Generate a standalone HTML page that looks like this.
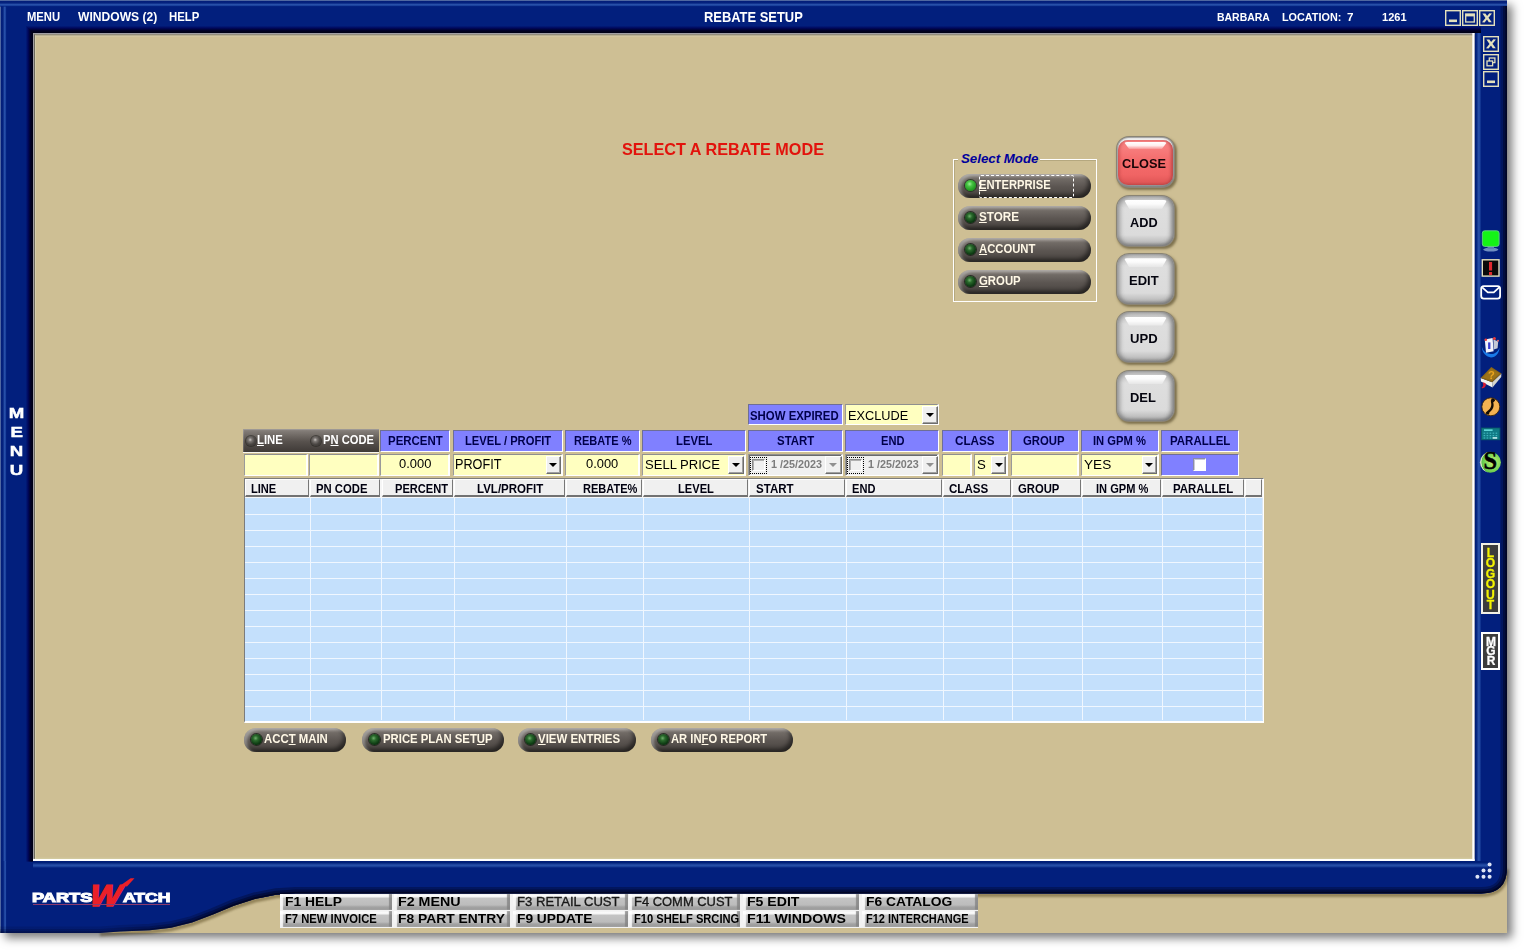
<!DOCTYPE html>
<html lang="en">
<head>
<meta charset="utf-8">
<title>REBATE SETUP</title>
<style>
html,body{margin:0;padding:0;background:#fff;}
body{width:1524px;height:950px;overflow:hidden;position:relative;font-family:"Liberation Sans",sans-serif;}
#win{position:absolute;left:0;top:0;width:1507px;height:933px;background:#cebf94;box-shadow:5px 5px 9px 0 rgba(0,0,0,.52);}
#win div,#win span.t,#win svg{position:absolute;box-sizing:border-box;}
span.t{white-space:pre;transform-origin:0 50%;display:block;letter-spacing:0;}
span.t.v{writing-mode:vertical-rl;text-orientation:upright;font-weight:bold;line-height:13px;width:13px;letter-spacing:-4.6px;transform:scaleX(.8);transform-origin:50% 50%;}
span.t u{text-decoration:underline;text-underline-offset:1px;}
.hdr{background:#8080ff;border:1px solid;border-color:#6e6e96 #fff #fff #6e6e96;}
.inp{background:#ffffc0;border:solid;border-width:1px 2px 1.6px 1.4px;border-color:#8f8f8f #fff #fff #9a9a9a;}
.dd{background:#f0f0f0;border:1px solid;border-color:#fff #6d6d6d #6d6d6d #fff;box-shadow:inset -1px -1px 0 #a0a0a0;}
.dd:after{content:"";position:absolute;left:50%;top:50%;margin:-2px 0 0 -4px;border:4px solid transparent;border-top:4px solid #000;border-bottom:0;}
.dd.g:after{border-top-color:#909090;}
.gh{background:#f0f0f0;border:solid;border-width:1px 1.6px 2px 1px;border-color:#fff #777 #727272 #fff;}
.pill{border-radius:12px;background:linear-gradient(180deg,#8f8983 0%,#716b66 20%,#5c5652 52%,#47423e 100%);box-shadow:inset 3px 2px 3px rgba(255,255,255,.34),inset -3px -3px 4px rgba(0,0,0,.5);}
.led{border-radius:50%;width:11px;height:11px;}
.led.on{background:radial-gradient(circle at 42% 36%,#9af094 0%,#46c242 28%,#27a026 60%,#147214 100%);box-shadow:0 0 0 1px rgba(30,45,25,.75);}
.led.off{background:radial-gradient(circle at 42% 38%,#6fae6c 0%,#2a6a2c 26%,#0f3c14 62%,#071e0a 100%);box-shadow:0 0 0 1px rgba(25,30,22,.8);}
.led.gr{background:radial-gradient(circle at 42% 38%,#c8c4c0 0%,#7a7572 22%,#4a4643 55%,#2e2a28 100%);box-shadow:0 0 0 1px rgba(30,30,25,.5);}
.bb{border-radius:13px;background:#8a8474;box-shadow:1.5px 2px 2.5px rgba(60,50,20,.55);}
.bf{border-radius:12px;overflow:hidden;}
.bf.w{background:linear-gradient(180deg,#bcbcbc 0%,#c6c6c6 7%,#dedede 24%,#dbdbdb 78%,#bdbdbd 92%,#9e9e9e 100%);box-shadow:inset 4px 0 4px -1px rgba(120,120,120,.65),inset -4px 0 4px -1px rgba(105,105,105,.75),inset 0 -2px 3px rgba(110,110,110,.35);}
.bf.r{border-radius:10px;background:linear-gradient(180deg,#f68484 0%,#f77c7c 20%,#f46c6c 45%,#f06464 78%,#e25858 93%,#cc4c4c 100%);box-shadow:inset 3px 0 3px -1px rgba(190,70,70,.6),inset -3px 0 3px -1px rgba(170,60,60,.7),0 -1.4px 1px rgba(255,255,255,.75);}
#win .bf .hl{left:7px;top:4.2px;right:7px;height:9px;background:linear-gradient(180deg,#fff 0%,rgba(255,255,255,.92) 45%,rgba(255,255,255,.25) 100%);clip-path:polygon(0 0,100% 0,88% 100%,12% 100%);border-radius:3px;filter:blur(.6px);}
#win .bf.r .hl{left:6px;top:2.4px;right:6px;height:7px;background:linear-gradient(180deg,#fff 0%,rgba(255,244,244,.95) 50%,rgba(255,210,210,.3) 100%);}
.fk{background:linear-gradient(180deg,#ffffff 0,#f4f4f4 3px,#c4c4c4 4px,#bcbcbc 11px,#a2a2a2 13px,#9a9a9a 100%);box-shadow:inset 3px 0 1px rgba(255,255,255,.85),inset -3px 0 1px rgba(130,130,130,.8);}
.wb{border:1px solid #e4e0bc;background:#021f7d;}
</style>
</head>
<body>
<div id="win">
<svg width="1524" height="950" viewBox="0 0 1524 950" style="left:0;top:0">
<defs>
<linearGradient id="gt" x1="0" y1="0" x2="0" y2="1"><stop offset="0" stop-color="#5068a0"/><stop offset=".03" stop-color="#5068a0"/><stop offset=".031" stop-color="#031d79"/><stop offset=".09" stop-color="#05237f"/><stop offset=".135" stop-color="#2850a8"/><stop offset=".16" stop-color="#214aa4"/><stop offset=".2" stop-color="#021f7d"/><stop offset=".78" stop-color="#021f7d"/><stop offset=".85" stop-color="#00075c"/><stop offset=".93" stop-color="#000024"/><stop offset="1" stop-color="#000012"/></linearGradient>
<linearGradient id="gl" x1="0" y1="0" x2="1" y2="0"><stop offset="0" stop-color="#5068a0"/><stop offset=".03" stop-color="#5068a0"/><stop offset=".031" stop-color="#031d79"/><stop offset=".09" stop-color="#05237f"/><stop offset=".135" stop-color="#2850a8"/><stop offset=".16" stop-color="#214aa4"/><stop offset=".2" stop-color="#021f7d"/><stop offset=".78" stop-color="#021f7d"/><stop offset=".85" stop-color="#00075c"/><stop offset=".93" stop-color="#000024"/><stop offset="1" stop-color="#000012"/></linearGradient>
<linearGradient id="gr" x1="0" y1="0" x2="1" y2="0"><stop offset="0" stop-color="#001c74"/><stop offset=".05" stop-color="#00207a"/><stop offset=".125" stop-color="#2850a8"/><stop offset=".155" stop-color="#2149a2"/><stop offset=".21" stop-color="#021f7d"/><stop offset="1" stop-color="#021f7d"/></linearGradient>
<linearGradient id="gb" x1="0" y1="0" x2="0" y2="1"><stop offset="0" stop-color="#001c74"/><stop offset=".05" stop-color="#00207a"/><stop offset=".125" stop-color="#2850a8"/><stop offset=".155" stop-color="#2149a2"/><stop offset=".21" stop-color="#021f7d"/><stop offset="1" stop-color="#021f7d"/></linearGradient>
<linearGradient id="gl6" x1="0" y1="0" x2="1" y2="0"><stop offset="0" stop-color="#5068a0"/><stop offset=".16" stop-color="#5068a0"/><stop offset=".17" stop-color="#031d79"/><stop offset=".5" stop-color="#05237f"/><stop offset=".74" stop-color="#2850a8"/><stop offset=".88" stop-color="#214aa4"/><stop offset="1" stop-color="#021f7d"/></linearGradient>
<linearGradient id="eg" gradientUnits="userSpaceOnUse" x1="110" y1="0" x2="240" y2="0"><stop offset="0" stop-color="#000016" stop-opacity=".4"/><stop offset="1" stop-color="#000016" stop-opacity="1"/></linearGradient>
<filter id="bl" x="-5%" y="-50%" width="110%" height="200%"><feGaussianBlur stdDeviation="1.3"/></filter>
<clipPath id="fc"><path d="M0,0 H1507 V868 Q1507,893.5 1481,893.5 L295,893.5 L276,894.7 L255,898.9 L234,905.7 L213,914.6 L192,922.5 L171,927.8 L150,930.2 L120,931.6 L100,933 H0 Z M33,33 H1474.5 V861 H33 Z" clip-rule="evenodd"/></clipPath>
</defs>
<path d="M1507,868 Q1507,893.5 1481,893.5 L295,893.5 L276,894.7 L255,898.9 L234,905.7 L213,914.6 L192,922.5 L171,927.8 L150,930.2 L120,931.6 L100,933" transform="translate(0,1.6)" fill="none" stroke="#3a2c00" stroke-width="4" opacity=".4" filter="url(#bl)"/>
<path d="M0,0 H1507 V868 Q1507,893.5 1481,893.5 L295,893.5 L276,894.7 L255,898.9 L234,905.7 L213,914.6 L192,922.5 L171,927.8 L150,930.2 L120,931.6 L100,933 H0 Z M33,33 H1474.5 V861 H33 Z" fill="#021f7d" fill-rule="evenodd"/>
<g clip-path="url(#fc)">
<rect x="0" y="0" width="1507" height="33" fill="url(#gt)"/>
<rect x="1481" y="6.6" width="26" height="30" fill="#021f7d"/>
<rect x="1474.5" y="33" width="33" height="840" fill="url(#gr)"/>
<rect x="33" y="861" width="1455" height="33" fill="url(#gb)"/>
<rect x="33" y="868" width="262" height="30" fill="#021f7d"/>
<rect x="0" y="6.6" width="33" height="855" fill="url(#gl)"/>
<rect x="0" y="861" width="6.6" height="72" fill="url(#gl6)"/>
<path d="M0,0 L33,33 L33,0 Z" fill="url(#gt)"/>
<path d="M1474.5,861 L1507,893.5 L1474.5,893.5 Z" fill="url(#gb)"/>
<path d="M1474.5,861 h7 l-7,7 Z" fill="#1a3f9c" opacity=".0"/>
<g fill="none" stroke="url(#eg)"><path d="M1507,6 V868 Q1507,893.5 1481,893.5 L295,893.5 L276,894.7 L255,898.9 L234,905.7 L213,914.6 L192,922.5 L171,927.8 L150,930.2 L120,931.6 L100,933 H0" stroke-width="13" opacity=".3"/><path d="M1507,6 V868 Q1507,893.5 1481,893.5 L295,893.5 L276,894.7 L255,898.9 L234,905.7 L213,914.6 L192,922.5 L171,927.8 L150,930.2 L120,931.6 L100,933 H0" stroke-width="8" opacity=".42"/><path d="M1507,6 V868 Q1507,893.5 1481,893.5 L295,893.5 L276,894.7 L255,898.9 L234,905.7 L213,914.6 L192,922.5 L171,927.8 L150,930.2 L120,931.6 L100,933 H0" stroke-width="3.4" opacity=".62"/></g>
</g>
<rect x="33" y="33" width="1441.5" height="1.5" fill="#a09ea4"/><rect x="33" y="34.5" width="1441.5" height="1" fill="#6e6a5c"/><rect x="35" y="35.5" width="1437.5" height="1" fill="#d4ccaa"/>
<rect x="33" y="33" width="1" height="828" fill="#a09ea4"/><rect x="34" y="34.5" width="1" height="826.5" fill="#6e6a5c"/><rect x="35" y="35.5" width="1" height="823.5" fill="#d4ccaa"/>
<rect x="1472.3" y="33" width="2.2" height="828" fill="#fff"/><rect x="33" y="858.9" width="1441.5" height="2.1" fill="#fff"/>
<rect x="36" y="857.6" width="1436" height="1.3" fill="#d2c99e"/>
<g fill="#dfe5f6"><circle cx="1489.6" cy="864.5" r="2"/><circle cx="1483.5" cy="870.6" r="2"/><circle cx="1489.6" cy="870.6" r="2"/><circle cx="1477.4" cy="876.7" r="2"/><circle cx="1483.5" cy="876.7" r="2"/><circle cx="1489.6" cy="876.7" r="2"/></g>
</svg>
<svg width="16" height="16" viewBox="0 0 16 16" style="left:1444.5px;top:9.5px"><rect x=".7" y=".7" width="14.6" height="14.6" fill="#021f7d" stroke="#e4e0bc" stroke-width="1.4"/><rect x="4" y="9.5" width="8" height="2.6" fill="#e4e0bc"/></svg>
<svg width="16" height="16" viewBox="0 0 16 16" style="left:1461.7px;top:9.5px"><rect x=".7" y=".7" width="14.6" height="14.6" fill="#021f7d" stroke="#e4e0bc" stroke-width="1.4"/><rect x="3.7" y="4" width="8.6" height="8" fill="none" stroke="#e4e0bc" stroke-width="1.3"/><rect x="3.7" y="4" width="8.6" height="2.4" fill="#e4e0bc"/></svg>
<svg width="16" height="16" viewBox="0 0 16 16" style="left:1479px;top:9.5px"><rect x=".7" y=".7" width="14.6" height="14.6" fill="#021f7d" stroke="#e4e0bc" stroke-width="1.4"/><path d="M3.4,3.6 L6.4,3.6 L8.1,6.1 L10.4,3.2 L13,3.4 L9.5,7.7 L12.8,12.2 L9.8,12.2 L8,9.6 L5.6,12.6 L3,12.2 L6.5,7.9 Z" fill="#e4e0bc"/></svg>
<svg width="16" height="16" viewBox="0 0 16 16" style="left:1482.7px;top:35.6px"><rect x=".7" y=".7" width="14.6" height="14.6" fill="#021f7d" stroke="#e4e0bc" stroke-width="1.4"/><path d="M3.4,3.6 L6.4,3.6 L8.1,6.1 L10.4,3.2 L13,3.4 L9.5,7.7 L12.8,12.2 L9.8,12.2 L8,9.6 L5.6,12.6 L3,12.2 L6.5,7.9 Z" fill="#e4e0bc"/></svg>
<svg width="16" height="16" viewBox="0 0 16 16" style="left:1482.7px;top:54.3px"><rect x=".7" y=".7" width="14.6" height="14.6" fill="#021f7d" stroke="#e4e0bc" stroke-width="1.4"/><rect x="6.3" y="4" width="5.6" height="4.6" fill="none" stroke="#e4e0bc" stroke-width="1.3"/><rect x="4" y="7" width="5.6" height="4.8" fill="#021f7d" stroke="#e4e0bc" stroke-width="1.3"/></svg>
<svg width="16" height="16" viewBox="0 0 16 16" style="left:1482.7px;top:71px"><rect x=".7" y=".7" width="14.6" height="14.6" fill="#021f7d" stroke="#e4e0bc" stroke-width="1.4"/><rect x="4" y="9.5" width="8" height="2.6" fill="#e4e0bc"/></svg>
<span class="t v" style="left:8.4px;top:404px;font-size:15.3px;line-height:16px;width:16px;letter-spacing:1.9px;color:#fff;transform:scaleX(1.22);-webkit-text-stroke:.45px #fff;">MENU</span>
<div style="left:952.5px;top:158.5px;width:144.5px;height:143.5px;border:1px solid #fff;box-shadow:inset 1px 1px 0 rgba(160,150,110,.55), 1px 1px 0 rgba(160,150,110,.0);"></div>
<div style="left:958px;top:150px;width:82px;height:16px;background:#cebf94;"></div>
<div class="pill" style="left:957.6px;top:174px;width:133.80000000000007px;height:23.80000000000001px;"></div>
<div class="led on" style="left:965.3px;top:180px"></div>
<div class="pill" style="left:957.6px;top:206px;width:133.80000000000007px;height:23.80000000000001px;"></div>
<div class="led off" style="left:965.3px;top:212px"></div>
<div class="pill" style="left:957.6px;top:238px;width:133.80000000000007px;height:23.80000000000001px;"></div>
<div class="led off" style="left:965.3px;top:244px"></div>
<div class="pill" style="left:957.6px;top:270px;width:133.80000000000007px;height:23.80000000000001px;"></div>
<div class="led off" style="left:965.3px;top:276px"></div>
<div style="left:979px;top:175px;width:94.5px;height:22.5px;border:1px dashed #fff;border-radius:2px;"></div>
<div class="bb" style="left:1115.6px;top:136.2px;width:59.8px;height:52.2px"></div>
<div class="bf w" style="left:1117px;top:137.3px;width:57.3px;height:50px"></div>
<div class="bf r" style="left:1117.9px;top:139.7px;width:55.2px;height:45.6px"><div class="hl"></div></div>
<div class="bb" style="left:1115.6px;top:194.5px;width:59.8px;height:52.2px"></div>
<div class="bf w" style="left:1117px;top:195.6px;width:57.3px;height:50px"><div class=hl></div></div>
<div class="bb" style="left:1115.6px;top:252.9px;width:59.8px;height:52.2px"></div>
<div class="bf w" style="left:1117px;top:254.0px;width:57.3px;height:50px"><div class=hl></div></div>
<div class="bb" style="left:1115.6px;top:311.2px;width:59.8px;height:52.2px"></div>
<div class="bf w" style="left:1117px;top:312.4px;width:57.3px;height:50px"><div class=hl></div></div>
<div class="bb" style="left:1115.6px;top:369.6px;width:59.8px;height:52.2px"></div>
<div class="bf w" style="left:1117px;top:370.7px;width:57.3px;height:50px"><div class=hl></div></div>
<div style="left:243px;top:429.3px;width:136px;height:23.099999999999966px;background:linear-gradient(180deg,#8a847f 0%,#6e6863 30%,#57514d 55%,#3f3a37 100%);box-shadow:inset 1px 1px 1px rgba(255,255,255,.2),0 1px 0 rgba(255,255,255,.85);"></div>
<div class="led gr" style="left:245.5px;top:435.6px;width:10px;height:10px"></div>
<div class="led gr" style="left:310.8px;top:435.6px;width:10px;height:10px"></div>
<div class="hdr" style="left:380.2px;top:430px;width:70.1px;height:21.5px"></div>
<div class="hdr" style="left:452.5px;top:430px;width:110.1px;height:21.5px"></div>
<div class="hdr" style="left:564.6px;top:430px;width:75.2px;height:21.5px"></div>
<div class="hdr" style="left:641.6px;top:430px;width:104.1px;height:21.5px"></div>
<div class="hdr" style="left:747.5px;top:430px;width:95.1px;height:21.5px"></div>
<div class="hdr" style="left:844.7px;top:430px;width:94.6px;height:21.5px"></div>
<div class="hdr" style="left:941.5px;top:430px;width:67.2px;height:21.5px"></div>
<div class="hdr" style="left:1010.8px;top:430px;width:68.0px;height:21.5px"></div>
<div class="hdr" style="left:1080.6px;top:430px;width:78.0px;height:21.5px"></div>
<div class="hdr" style="left:1160.8px;top:430px;width:78.2px;height:21.5px"></div>
<div class="hdr" style="left:747.5px;top:404.2px;width:95.1px;height:21.3px"></div>
<div class="inp" style="left:243.6px;top:453.6px;width:64.6px;height:22.0px"></div>
<div class="inp" style="left:308.6px;top:453.6px;width:70.2px;height:22.0px"></div>
<div class="inp" style="left:380.2px;top:453.6px;width:70.1px;height:22.0px"></div>
<div class="inp" style="left:452.5px;top:453.6px;width:110.1px;height:22.0px"></div>
<div class="dd" style="left:545.5px;top:455.6px;width:15.8px;height:18.2px"></div>
<div class="inp" style="left:564.6px;top:453.6px;width:75.2px;height:22.0px"></div>
<div class="inp" style="left:641.6px;top:453.6px;width:104.1px;height:22.0px"></div>
<div class="dd" style="left:728.2px;top:455.6px;width:16.0px;height:18.2px"></div>
<div class="inp" style="left:941.5px;top:453.6px;width:30.3px;height:22.0px"></div>
<div class="inp" style="left:973.7px;top:453.6px;width:33.9px;height:22.0px"></div>
<div class="dd" style="left:991.4px;top:455.6px;width:15.0px;height:18.2px"></div>
<div class="inp" style="left:1010.8px;top:453.6px;width:68.0px;height:22.0px"></div>
<div class="inp" style="left:1080.6px;top:453.6px;width:78.0px;height:22.0px"></div>
<div class="dd" style="left:1141.6px;top:455.6px;width:15.4px;height:18.2px"></div>
<div class="inp" style="left:844.7px;top:404.2px;width:94.8px;height:21.3px"></div>
<div class="dd" style="left:922.4px;top:406.2px;width:15.8px;height:17.5px"></div>
<div class="inp" style="left:747.5px;top:453.6px;width:95.1px;height:22px;background:#f0f0f0;box-shadow:inset 1px 1px 0 #6a6a6a"></div>
<div style="left:750.4px;top:456.6px;width:16.6px;height:17.6px;border:1px dotted #000;"></div>
<div style="left:752.4px;top:458.6px;width:12.6px;height:12.6px;background:#f0f0f0;border:1px solid;border-color:#8a8a8a #fff #fff #8a8a8a;box-shadow:inset 1px 1px 0 #b0b0b0"></div>
<div class="dd g" style="left:825px;top:455.6px;width:16.6px;height:18.2px"></div>
<div class="inp" style="left:844.7px;top:453.6px;width:94.6px;height:22px;background:#f0f0f0;box-shadow:inset 1px 1px 0 #6a6a6a"></div>
<div style="left:847.3px;top:456.6px;width:16.6px;height:17.6px;border:1px dotted #000;"></div>
<div style="left:849.3px;top:458.6px;width:12.6px;height:12.6px;background:#f0f0f0;border:1px solid;border-color:#8a8a8a #fff #fff #8a8a8a;box-shadow:inset 1px 1px 0 #b0b0b0"></div>
<div class="dd g" style="left:922.4px;top:455.6px;width:15.8px;height:18.2px"></div>
<div class="hdr" style="left:1160.8px;top:453.6px;width:78.2px;height:22px"></div>
<div style="left:1193.3px;top:458.3px;width:12.8px;height:12.8px;background:#fff;border:1px solid;border-color:#8c8ca8 #fff #fff #8c8ca8;box-shadow:inset 1px 1px 0 #c8c8d8"></div>
<div style="left:243.5px;top:477.5px;width:1020.5999999999999px;height:245.5px;background:#c4e0fc;border:solid;border-width:1.5px 1.2px 2.6px 1.5px;border-color:#7c7c7c #fff #fff #7c7c7c;"></div>
<div style="left:245px;top:478.6px;width:1017.8px;height:19.399999999999977px;background:#f6f6f6;"></div>
<div class="gh" style="left:245.2px;top:479px;width:64.0px;height:17.8px"></div>
<div class="gh" style="left:310px;top:479px;width:70.0px;height:17.8px"></div>
<div class="gh" style="left:381.6px;top:479px;width:71.0px;height:17.8px"></div>
<div class="gh" style="left:453.9px;top:479px;width:111.3px;height:17.8px"></div>
<div class="gh" style="left:566px;top:479px;width:76.0px;height:17.8px"></div>
<div class="gh" style="left:643px;top:479px;width:105.0px;height:17.8px"></div>
<div class="gh" style="left:749px;top:479px;width:96.0px;height:17.8px"></div>
<div class="gh" style="left:846px;top:479px;width:95.6px;height:17.8px"></div>
<div class="gh" style="left:943px;top:479px;width:67.8px;height:17.8px"></div>
<div class="gh" style="left:1012px;top:479px;width:69.0px;height:17.8px"></div>
<div class="gh" style="left:1082.2px;top:479px;width:78.8px;height:17.8px"></div>
<div class="gh" style="left:1162.2px;top:479px;width:81.8px;height:17.8px"></div>
<div class="gh" style="left:1245.2px;top:479px;width:17.2px;height:17.8px"></div>
<svg width="1018" height="222" viewBox="0 0 1018 222" style="left:245px;top:498px" fill="#f0f7ff" shape-rendering="crispEdges"><rect x="0" y="16" width="1018" height="1"/><rect x="0" y="32" width="1018" height="1"/><rect x="0" y="48" width="1018" height="1"/><rect x="0" y="64" width="1018" height="1"/><rect x="0" y="80" width="1018" height="1"/><rect x="0" y="96" width="1018" height="1"/><rect x="0" y="112" width="1018" height="1"/><rect x="0" y="128" width="1018" height="1"/><rect x="0" y="144" width="1018" height="1"/><rect x="0" y="160" width="1018" height="1"/><rect x="0" y="176" width="1018" height="1"/><rect x="0" y="192" width="1018" height="1"/><rect x="0" y="208" width="1018" height="1"/><rect x="65" y="0" width="1" height="222"/><rect x="136" y="0" width="1" height="222"/><rect x="209" y="0" width="1" height="222"/><rect x="321" y="0" width="1" height="222"/><rect x="398" y="0" width="1" height="222"/><rect x="504" y="0" width="1" height="222"/><rect x="601" y="0" width="1" height="222"/><rect x="698" y="0" width="1" height="222"/><rect x="767" y="0" width="1" height="222"/><rect x="837" y="0" width="1" height="222"/><rect x="917" y="0" width="1" height="222"/><rect x="1000" y="0" width="1" height="222"/><rect x="1017" y="0" width="1" height="222" fill="#dbe8f6"/></svg>
<div class="pill" style="left:244px;top:728px;width:102.0px;height:23.6px"></div>
<div class="led off" style="left:250.89999999999998px;top:733.8px"></div>
<div class="pill" style="left:361.6px;top:728px;width:142.4px;height:23.6px"></div>
<div class="led off" style="left:369.0px;top:733.8px"></div>
<div class="pill" style="left:518px;top:728px;width:117.7px;height:23.6px"></div>
<div class="led off" style="left:524.9px;top:733.8px"></div>
<div class="pill" style="left:650.8px;top:728px;width:142.2px;height:23.6px"></div>
<div class="led off" style="left:657.7px;top:733.8px"></div>
<span class="t" style="left:87.3px;top:880.3px;font-size:30.4px;line-height:30.4px;color:#ea2028;font-weight:bold;transform:skewX(-17deg) scaleX(1.1);transform-origin:0 25.7px;-webkit-text-stroke:1.3px #ea2028;">W</span>
<svg width="60" height="40" viewBox="85 872 60 40" style="left:85px;top:872px" fill="#ea2028"><path d="M120.8,885.2 L130.6,878.3 L134.5,878.3 L127,886.4 Z"/></svg>
<div style="left:32.5px;top:903.9px;width:137.8px;height:1.1000000000000227px;background:#8c3a6e;"></div>
<div style="left:280px;top:894px;width:698px;height:34px;background:#f2f2f2;"></div>
<div class="fk" style="left:280.2px;top:894.1px;width:111.6px;height:15.8px"></div>
<div class="fk" style="left:280.2px;top:911.4px;width:111.6px;height:15.8px"></div>
<div class="fk" style="left:393.7px;top:894.1px;width:116.7px;height:15.8px"></div>
<div class="fk" style="left:393.7px;top:911.4px;width:116.7px;height:15.8px"></div>
<div class="fk" style="left:512.7px;top:894.1px;width:115.5px;height:15.8px"></div>
<div class="fk" style="left:512.7px;top:911.4px;width:115.5px;height:15.8px"></div>
<div class="fk" style="left:629.4px;top:894.1px;width:110.9px;height:15.8px"></div>
<div class="fk" style="left:629.4px;top:911.4px;width:110.9px;height:15.8px"></div>
<div class="fk" style="left:742.5px;top:894.1px;width:116.7px;height:15.8px"></div>
<div class="fk" style="left:742.5px;top:911.4px;width:116.7px;height:15.8px"></div>
<div class="fk" style="left:861.5px;top:894.1px;width:116.1px;height:15.8px"></div>
<div class="fk" style="left:861.5px;top:911.4px;width:116.1px;height:15.8px"></div>
<svg width="26" height="250" viewBox="0 0 26 250" style="left:1478px;top:228px">
<defs>
<radialGradient id="sg" cx=".62" cy=".5" r=".62"><stop offset="0" stop-color="#c4ee74"/><stop offset=".55" stop-color="#84da58"/><stop offset=".86" stop-color="#5cc44a"/><stop offset=".9" stop-color="#d6e6c4"/><stop offset="1" stop-color="#c2d4b6"/></radialGradient>
</defs>
<!-- monitor -->
<ellipse cx="12.8" cy="21.6" rx="7.6" ry="2" fill="#6f8ec2"/><rect x="9.6" y="18" width="6.4" height="3" fill="#5f7eb4"/>
<rect x="4.3" y="2.8" width="16.8" height="15.6" rx="2.4" fill="#14f416" stroke="#6ad08a" stroke-width=".9"/>
<!-- alert -->
<rect x="4.3" y="31.8" width="16.7" height="16.3" fill="#0a0a0a" stroke="#e4e0bc" stroke-width="1.4"/>
<rect x="11" y="34" width="3.1" height="8.5" fill="#e02a30"/><rect x="11" y="44" width="3.1" height="3" fill="#e02a30"/>
<!-- envelope -->
<rect x="3.2" y="58.1" width="18.9" height="12.5" rx="2.6" fill="none" stroke="#fff" stroke-width="1.8"/>
<path d="M4.2,59.4 L9.8,64.4 L15.8,64.4 L21.2,59.4" fill="none" stroke="#fff" stroke-width="1.8" stroke-linejoin="round"/>
<!-- info tray icon -->
<path d="M3.8,118.6 C5,124 9.4,126 13,126 C17,126 20.4,123.4 21.4,119.4 C21.6,124.6 17.6,129.4 13,129.4 C8.6,129.4 4,125 3.8,118.6 Z" fill="#1a7ae8"/>
<path d="M15.4,111.6 L20.2,113.4 L19.6,120.2 L15.8,121.4 Z" fill="#c4c8d6"/>
<path d="M6.8,111.6 L14.6,110 L15.6,123.2 L8,124.8 Z" fill="#f2f2fa"/>
<rect x="10.1" y="114.4" width="2.3" height="6.6" fill="#3a3ad0"/>
<circle cx="7.8" cy="111.8" r="1.3" fill="#e83a3a"/><circle cx="16.4" cy="110.6" r="1.5" fill="#e83a3a"/><circle cx="20" cy="112.8" r="1" fill="#e86a6a"/>
<!-- help book -->
<path d="M2.7,150 L14.1,154.2 L14.5,159.6 L3,153.6 Z" fill="#f2f2ee"/>
<path d="M23.4,145.4 L23.2,149 L14.5,159.6 L14.1,154.2 Z" fill="#d4d4cc"/>
<path d="M13.3,139 L23.4,145.4 L14.1,154.2 L2.7,150 Z" fill="#8c6614"/>
<path d="M13.3,140.4 L21.6,145.6 L14,152.6 L4.8,149.4 Z" fill="#9a721a"/>
<path d="M4.6,154.6 C7,154.4 8.4,155.6 7.8,157.6 C7.2,159.6 5.2,160.6 3.4,160 C5.4,158.8 5.8,156.8 4.6,154.6 Z" fill="#d81a34"/>
<!-- phone -->
<circle cx="12.8" cy="178.8" r="9" fill="#f4b252" stroke="#3a2408" stroke-width=".9"/>
<path d="M13.6,170.8 C15.4,170.2 17.2,171.2 17,172.8 L15.2,174.6 C16.6,178.6 14.4,182.6 11.4,184.4 L11,186.4 C9.4,187 7.6,185.8 7.8,184.4 L10,182.6 C12.6,181 13.9,177.6 13,174.6 L12.8,172.4 Z" fill="#140c04"/>
<!-- calculator -->
<rect x="3.5" y="200" width="18.4" height="11.8" fill="#0f7a84" stroke="#0a5a66" stroke-width=".8"/>
<rect x="6" y="201.4" width="8.6" height="1.5" fill="#6ae0e0"/>
<g fill="#3fb4bc"><rect x="5.6" y="204.6" width="1.6" height="1.2"/><rect x="8.6" y="204.6" width="1.6" height="1.2"/><rect x="11.6" y="204.6" width="1.6" height="1.2"/><rect x="14.6" y="204.6" width="1.6" height="1.2"/><rect x="17.6" y="204.6" width="1.6" height="1.2"/><rect x="5.6" y="207" width="1.6" height="1.2"/><rect x="8.6" y="207" width="1.6" height="1.2"/><rect x="11.6" y="207" width="1.6" height="1.2"/><rect x="14.6" y="207" width="1.6" height="1.2"/><rect x="17.6" y="207" width="1.6" height="1.2"/><rect x="5.6" y="209.4" width="1.6" height="1.2"/><rect x="8.6" y="209.4" width="1.6" height="1.2"/><rect x="11.6" y="209.4" width="1.6" height="1.2"/></g><rect x="14.6" y="209.2" width="4.6" height="1.5" fill="#d8f8f8"/>
<!-- S circle -->
<circle cx="12.4" cy="234.3" r="10.5" fill="url(#sg)"/>
</svg>
<span class="t" style="left:1483.5px;top:449px;font-size:24.4px;line-height:24.4px;color:#000;font-weight:bold;font-family:'Liberation Serif',serif;-webkit-text-stroke:.4px #000;">S</span>
<div style="left:1481.4px;top:543.2px;width:18.899999999999864px;height:71.19999999999993px;background:#3c3c3c;border:2px solid #f2f0e4;"></div>
<div style="left:1481.4px;top:631.8px;width:18.899999999999864px;height:38.40000000000009px;background:#3c3c3c;border:2px solid #fff;"></div>
<span class="t v" id="lo" style="left:1484.1px;top:545px;font-size:13.2px;color:#f4f400;transform:scaleX(.92);-webkit-text-stroke:.3px #f4f400;">LOGOUT</span>
<span class="t v" id="mg" style="left:1483.8px;top:635.4px;font-size:12.2px;color:#fff;transform:scaleX(.98);-webkit-text-stroke:.3px #fff;">MGR</span>
<span class="t" style="left:26.7px;top:10.6px;font-size:12.57px;line-height:12.57px;color:#ffffff;font-weight:bold;font-style:normal;transform:scaleX(0.8954);">MENU</span>
<span class="t" style="left:77.6px;top:10.6px;font-size:12.57px;line-height:12.57px;color:#ffffff;font-weight:bold;font-style:normal;transform:scaleX(0.9622);">WINDOWS (2)</span>
<span class="t" style="left:168.8px;top:10.6px;font-size:12.57px;line-height:12.57px;color:#ffffff;font-weight:bold;font-style:normal;transform:scaleX(0.9050);">HELP</span>
<span class="t" style="left:703.7px;top:11.4px;font-size:13.97px;line-height:13.97px;color:#ffffff;font-weight:bold;font-style:normal;transform:scaleX(0.9242);">REBATE SETUP</span>
<span class="t" style="left:1217.3px;top:12.3px;font-size:11.31px;line-height:11.31px;color:#ffffff;font-weight:bold;font-style:normal;transform:scaleX(0.9249);">BARBARA</span>
<span class="t" style="left:1281.8px;top:12.3px;font-size:11.31px;line-height:11.31px;color:#ffffff;font-weight:bold;font-style:normal;transform:scaleX(0.9579);">LOCATION:</span>
<span class="t" style="left:1347.3px;top:12.3px;font-size:11.31px;line-height:11.31px;color:#ffffff;font-weight:bold;font-style:normal;transform:scaleX(1.0351);">7</span>
<span class="t" style="left:1381.8px;top:12.3px;font-size:11.31px;line-height:11.31px;color:#ffffff;font-weight:bold;font-style:normal;transform:scaleX(0.9752);">1261</span>
<span class="t" style="left:621.5px;top:141.1px;font-size:16.48px;line-height:16.48px;color:#e2130c;font-weight:bold;font-style:normal;transform:scaleX(0.9840);">SELECT A REBATE MODE</span>
<span class="t" style="left:961.0px;top:151.5px;font-size:13.27px;line-height:13.27px;color:#00009c;font-weight:bold;font-style:italic;">Select Mode</span>
<span class="t" style="left:978.5px;top:178.7px;font-size:12.29px;line-height:12.29px;color:#fff8e6;font-weight:bold;font-style:normal;transform:scaleX(0.9122);"><u>E</u>NTERPRISE</span>
<span class="t" style="left:978.5px;top:210.7px;font-size:12.29px;line-height:12.29px;color:#fff8e6;font-weight:bold;font-style:normal;transform:scaleX(0.9524);"><u>S</u>TORE</span>
<span class="t" style="left:978.5px;top:242.7px;font-size:12.29px;line-height:12.29px;color:#fff8e6;font-weight:bold;font-style:normal;transform:scaleX(0.9186);"><u>A</u>CCOUNT</span>
<span class="t" style="left:978.5px;top:274.7px;font-size:12.29px;line-height:12.29px;color:#fff8e6;font-weight:bold;font-style:normal;transform:scaleX(0.9258);"><u>G</u>ROUP</span>
<span class="t" style="left:1121.7px;top:157.4px;font-size:13.41px;line-height:13.41px;color:#1a0508;font-weight:bold;font-style:normal;transform:scaleX(0.9506);">CLOSE</span>
<span class="t" style="left:1129.5px;top:215.7px;font-size:13.41px;line-height:13.41px;color:#05050f;font-weight:bold;font-style:normal;transform:scaleX(0.9504);">ADD</span>
<span class="t" style="left:1128.5px;top:274.1px;font-size:13.41px;line-height:13.41px;color:#05050f;font-weight:bold;font-style:normal;transform:scaleX(0.9692);">EDIT</span>
<span class="t" style="left:1129.5px;top:332.4px;font-size:13.41px;line-height:13.41px;color:#05050f;font-weight:bold;font-style:normal;transform:scaleX(0.9751);">UPD</span>
<span class="t" style="left:1130.2px;top:390.8px;font-size:13.41px;line-height:13.41px;color:#05050f;font-weight:bold;font-style:normal;transform:scaleX(0.9625);">DEL</span>
<span class="t" style="left:257.3px;top:433.5px;font-size:12.15px;line-height:12.15px;color:#fff;font-weight:bold;font-style:normal;transform:scaleX(0.9321);"><u>L</u>INE</span>
<span class="t" style="left:323.0px;top:433.5px;font-size:12.15px;line-height:12.15px;color:#fff;font-weight:bold;font-style:normal;transform:scaleX(0.9196);">P<u>N</u> CODE</span>
<span class="t" style="left:388.1px;top:435.7px;font-size:11.87px;line-height:11.87px;color:#00004a;font-weight:bold;font-style:normal;transform:scaleX(0.9646);">PERCENT</span>
<span class="t" style="left:464.5px;top:435.7px;font-size:11.87px;line-height:11.87px;color:#00004a;font-weight:bold;font-style:normal;transform:scaleX(0.9430);">LEVEL / PROFIT</span>
<span class="t" style="left:573.5px;top:435.7px;font-size:11.87px;line-height:11.87px;color:#00004a;font-weight:bold;font-style:normal;transform:scaleX(0.9311);">REBATE %</span>
<span class="t" style="left:675.6px;top:435.7px;font-size:11.87px;line-height:11.87px;color:#00004a;font-weight:bold;font-style:normal;transform:scaleX(0.9516);">LEVEL</span>
<span class="t" style="left:776.6px;top:435.7px;font-size:11.87px;line-height:11.87px;color:#00004a;font-weight:bold;font-style:normal;transform:scaleX(0.9641);">START</span>
<span class="t" style="left:880.8px;top:435.7px;font-size:11.87px;line-height:11.87px;color:#00004a;font-weight:bold;font-style:normal;transform:scaleX(0.9370);">END</span>
<span class="t" style="left:955.3px;top:435.7px;font-size:11.87px;line-height:11.87px;color:#00004a;font-weight:bold;font-style:normal;transform:scaleX(0.9867);">CLASS</span>
<span class="t" style="left:1023.3px;top:435.7px;font-size:11.87px;line-height:11.87px;color:#00004a;font-weight:bold;font-style:normal;transform:scaleX(0.9556);">GROUP</span>
<span class="t" style="left:1093.3px;top:435.7px;font-size:11.87px;line-height:11.87px;color:#00004a;font-weight:bold;font-style:normal;transform:scaleX(0.9438);">IN GPM %</span>
<span class="t" style="left:1169.7px;top:435.7px;font-size:11.87px;line-height:11.87px;color:#00004a;font-weight:bold;font-style:normal;transform:scaleX(0.9678);">PARALLEL</span>
<span class="t" style="left:749.5px;top:409.5px;font-size:12.01px;line-height:12.01px;color:#00004a;font-weight:bold;font-style:normal;transform:scaleX(0.9499);">SHOW EXPIRED</span>
<span class="t" style="left:770.8px;top:458.7px;font-size:11.17px;line-height:11.17px;color:#7c7c7c;font-weight:bold;font-style:normal;transform:scaleX(0.9691);">1 /25/2023</span>
<span class="t" style="left:868.1px;top:458.7px;font-size:11.17px;line-height:11.17px;color:#7c7c7c;font-weight:bold;font-style:normal;transform:scaleX(0.9634);">1 /25/2023</span>
<span class="t" style="left:398.6px;top:456.7px;font-size:13.13px;line-height:13.13px;color:#000;font-weight:normal;font-style:normal;transform:scaleX(0.9855);">0.000</span>
<span class="t" style="left:455.4px;top:458.1px;font-size:13.97px;line-height:13.97px;color:#000;font-weight:normal;font-style:normal;transform:scaleX(0.9070);">PROFIT</span>
<span class="t" style="left:585.7px;top:456.7px;font-size:13.13px;line-height:13.13px;color:#000;font-weight:normal;font-style:normal;transform:scaleX(0.9824);">0.000</span>
<span class="t" style="left:644.8px;top:458.3px;font-size:13.69px;line-height:13.69px;color:#000;font-weight:normal;font-style:normal;transform:scaleX(0.9543);">SELL PRICE</span>
<span class="t" style="left:847.9px;top:408.5px;font-size:13.41px;line-height:13.41px;color:#000;font-weight:normal;font-style:normal;transform:scaleX(0.9507);">EXCLUDE</span>
<span class="t" style="left:976.9px;top:458.3px;font-size:13.69px;line-height:13.69px;color:#000;font-weight:normal;font-style:normal;transform:scaleX(0.9662);">S</span>
<span class="t" style="left:1084.0px;top:458.3px;font-size:13.69px;line-height:13.69px;color:#000;font-weight:normal;font-style:normal;transform:scaleX(0.9942);">YES</span>
<span class="t" style="left:250.7px;top:482.7px;font-size:12.01px;line-height:12.01px;color:#000010;font-weight:bold;font-style:normal;transform:scaleX(0.9246);">LINE</span>
<span class="t" style="left:315.7px;top:482.7px;font-size:12.01px;line-height:12.01px;color:#000010;font-weight:bold;font-style:normal;transform:scaleX(0.9414);">PN CODE</span>
<span class="t" style="left:394.9px;top:482.7px;font-size:12.01px;line-height:12.01px;color:#000010;font-weight:bold;font-style:normal;transform:scaleX(0.9257);">PERCENT</span>
<span class="t" style="left:476.8px;top:482.7px;font-size:12.01px;line-height:12.01px;color:#000010;font-weight:bold;font-style:normal;transform:scaleX(0.9591);">LVL/PROFIT</span>
<span class="t" style="left:582.9px;top:482.7px;font-size:12.01px;line-height:12.01px;color:#000010;font-weight:bold;font-style:normal;transform:scaleX(0.9198);">REBATE%</span>
<span class="t" style="left:677.9px;top:482.7px;font-size:12.01px;line-height:12.01px;color:#000010;font-weight:bold;font-style:normal;transform:scaleX(0.9278);">LEVEL</span>
<span class="t" style="left:755.5px;top:482.7px;font-size:12.01px;line-height:12.01px;color:#000010;font-weight:bold;font-style:normal;transform:scaleX(0.9609);">START</span>
<span class="t" style="left:851.9px;top:482.7px;font-size:12.01px;line-height:12.01px;color:#000010;font-weight:bold;font-style:normal;transform:scaleX(0.9226);">END</span>
<span class="t" style="left:948.8px;top:482.7px;font-size:12.01px;line-height:12.01px;color:#000010;font-weight:bold;font-style:normal;transform:scaleX(0.9658);">CLASS</span>
<span class="t" style="left:1017.5px;top:482.7px;font-size:12.01px;line-height:12.01px;color:#000010;font-weight:bold;font-style:normal;transform:scaleX(0.9401);">GROUP</span>
<span class="t" style="left:1095.7px;top:482.7px;font-size:12.01px;line-height:12.01px;color:#000010;font-weight:bold;font-style:normal;transform:scaleX(0.9225);">IN GPM %</span>
<span class="t" style="left:1173.0px;top:482.7px;font-size:12.01px;line-height:12.01px;color:#000010;font-weight:bold;font-style:normal;transform:scaleX(0.9536);">PARALLEL</span>
<span class="t" style="left:264.2px;top:732.6px;font-size:12.57px;line-height:12.57px;color:#fff8e6;font-weight:bold;font-style:normal;transform:scaleX(0.9054);">ACC<u>T</u> MAIN</span>
<span class="t" style="left:382.7px;top:732.6px;font-size:12.57px;line-height:12.57px;color:#fff8e6;font-weight:bold;font-style:normal;transform:scaleX(0.9024);">PRICE PLAN SET<u>U</u>P</span>
<span class="t" style="left:538.2px;top:732.6px;font-size:12.57px;line-height:12.57px;color:#fff8e6;font-weight:bold;font-style:normal;transform:scaleX(0.9119);"><u>V</u>IEW ENTRIES</span>
<span class="t" style="left:671.2px;top:732.6px;font-size:12.57px;line-height:12.57px;color:#fff8e6;font-weight:bold;font-style:normal;transform:scaleX(0.8941);">AR IN<u>F</u>O REPORT</span>
<span class="t" style="left:32.1px;top:891.5px;font-size:12.57px;line-height:12.57px;color:#fff;font-weight:bold;font-style:normal;transform:scaleX(1.4507);-webkit-text-stroke:1px #fff;">PARTS</span>
<span class="t" style="left:122.9px;top:891.5px;font-size:12.57px;line-height:12.57px;color:#fff;font-weight:bold;font-style:normal;transform:scaleX(1.3963);-webkit-text-stroke:1px #fff;">ATCH</span>
<span class="t" style="left:284.9px;top:894.6px;font-size:13.41px;line-height:13.41px;color:#000;font-weight:bold;font-style:normal;transform:scaleX(1.0323);">F1 HELP</span>
<span class="t" style="left:285.0px;top:913.0px;font-size:12.29px;line-height:12.29px;color:#000;font-weight:bold;font-style:normal;transform:scaleX(0.9152);">F7 NEW INVOICE</span>
<span class="t" style="left:398.4px;top:894.6px;font-size:13.41px;line-height:13.41px;color:#000;font-weight:bold;font-style:normal;transform:scaleX(1.0640);">F2 MENU</span>
<span class="t" style="left:398.4px;top:911.7px;font-size:13.41px;line-height:13.41px;color:#000;font-weight:bold;font-style:normal;transform:scaleX(1.0334);">F8 PART ENTRY</span>
<span class="t" style="left:517.4px;top:894.6px;font-size:13.41px;line-height:13.41px;color:#181818;font-weight:normal;font-style:normal;transform:scaleX(0.9769);-webkit-text-stroke:.35px #181818;">F3 RETAIL CUST</span>
<span class="t" style="left:517.4px;top:911.7px;font-size:13.41px;line-height:13.41px;color:#000;font-weight:bold;font-style:normal;transform:scaleX(1.0259);">F9 UPDATE</span>
<span class="t" style="left:634.1px;top:894.6px;font-size:13.41px;line-height:13.41px;color:#181818;font-weight:normal;font-style:normal;transform:scaleX(0.9653);-webkit-text-stroke:.35px #181818;">F4 COMM CUST</span>
<span class="t" style="left:634.2px;top:913.0px;font-size:12.29px;line-height:12.29px;color:#000;font-weight:bold;font-style:normal;transform:scaleX(0.9068);">F10 SHELF SRCING</span>
<span class="t" style="left:747.2px;top:894.6px;font-size:13.41px;line-height:13.41px;color:#000;font-weight:bold;font-style:normal;transform:scaleX(1.0498);">F5 EDIT</span>
<span class="t" style="left:747.2px;top:911.7px;font-size:13.41px;line-height:13.41px;color:#000;font-weight:bold;font-style:normal;transform:scaleX(1.0548);">F11 WINDOWS</span>
<span class="t" style="left:866.2px;top:894.6px;font-size:13.41px;line-height:13.41px;color:#000;font-weight:bold;font-style:normal;transform:scaleX(1.0303);">F6 CATALOG</span>
<span class="t" style="left:866.3px;top:913.0px;font-size:12.29px;line-height:12.29px;color:#000;font-weight:bold;font-style:normal;transform:scaleX(0.8942);">F12 INTERCHANGE</span>
<span class="t" style="left:1487.9px;top:368.5px;font-size:11.73px;line-height:11.73px;color:#eaa41e;font-weight:bold;font-style:normal;transform:scaleX(0.9559);">?</span>
</div>
</body>
</html>
